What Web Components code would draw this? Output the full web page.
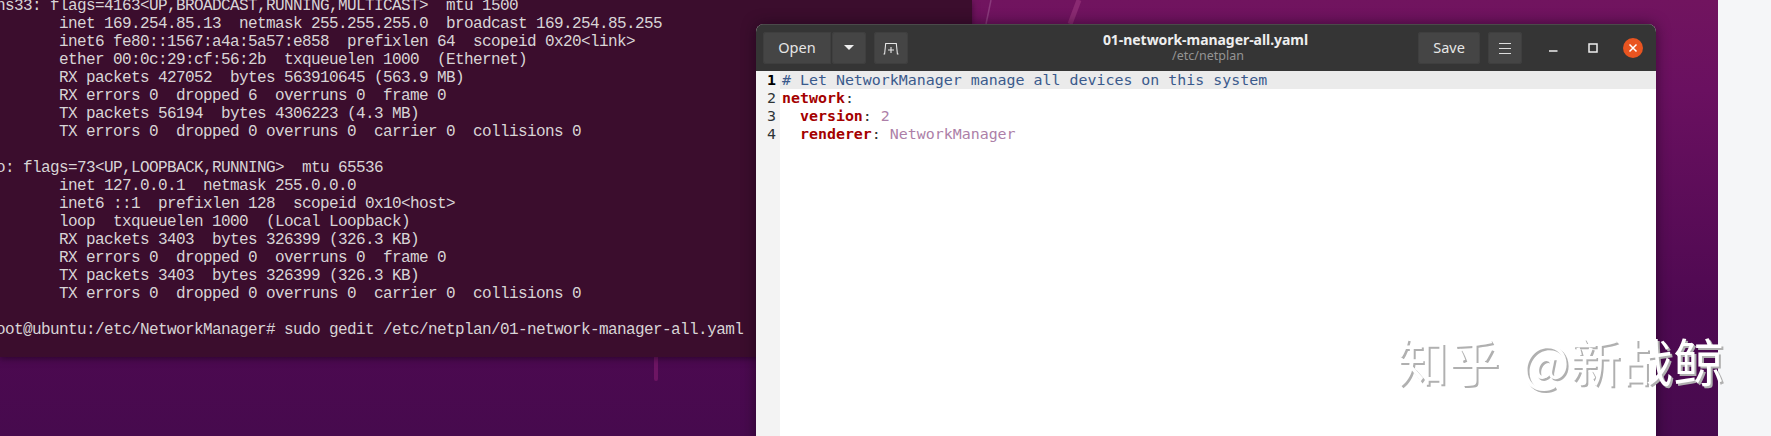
<!doctype html>
<html>
<head>
<meta charset="utf-8">
<style>
html, body { margin: 0; height: 100%; overflow: hidden; }
</style>
</head>
<body>
<shot-page>
  <desk-top>
    <term-window>ens33: flags=4163&lt;UP,BROADCAST,RUNNING,MULTICAST&gt;  mtu 1500
        inet 169.254.85.13  netmask 255.255.255.0  broadcast 169.254.85.255
        inet6 fe80::1567:a4a:5a57:e858  prefixlen 64  scopeid 0x20&lt;link&gt;
        ether 00:0c:29:cf:56:2b  txqueuelen 1000  (Ethernet)
        RX packets 427052  bytes 563910645 (563.9 MB)
        RX errors 0  dropped 6  overruns 0  frame 0
        TX packets 56194  bytes 4306223 (4.3 MB)
        TX errors 0  dropped 0 overruns 0  carrier 0  collisions 0

lo: flags=73&lt;UP,LOOPBACK,RUNNING&gt;  mtu 65536
        inet 127.0.0.1  netmask 255.0.0.0
        inet6 ::1  prefixlen 128  scopeid 0x10&lt;host&gt;
        loop  txqueuelen 1000  (Local Loopback)
        RX packets 3403  bytes 326399 (326.3 KB)
        RX errors 0  dropped 0  overruns 0  frame 0
        TX packets 3403  bytes 326399 (326.3 KB)
        TX errors 0  dropped 0 overruns 0  carrier 0  collisions 0

root@ubuntu:/etc/NetworkManager# sudo gedit /etc/netplan/01-network-manager-all.yaml</term-window>
    <gedit-window></gedit-window>
  </desk-top>
  <water-mark>知乎 @新战鲸</water-mark>
</shot-page>

<script type="module">
const define = (name, html) => {
  customElements.define(name, class extends HTMLElement {
    constructor () {
      super();
      this.attachShadow({ mode: 'open' }).innerHTML = html;
    }
  });
};

define('shot-page', `
<style>
  :host { display: grid; position: relative; grid-template-columns: 1718px 53px; width: 1771px; height: 436px; overflow: hidden; background: #f5f6f8; }
</style>
<slot></slot>`);

define('desk-top', `
<style>
  :host {
    display: block; position: relative; height: 436px; overflow: hidden;
    background: linear-gradient(180deg, #71145f 0, #6a1060 90px, #4e0951 310px, #470a4e 436px);
  }
  svg { position: absolute; left: 0; top: 0; }
</style>
<svg width="1718" height="436" fill="none">
  <path d="M991 0 L986 24" stroke="#8a3a7c" stroke-width="1.5"/>
  <path d="M1079 0 L1070 24" stroke="#8a2a72" stroke-width="5"/>
  <path d="M656 357 V379" stroke="#6d1563" stroke-width="4" stroke-linecap="round"/>
</svg>
<slot></slot>`);

define('term-window', `
<style>
  :host {
    display: block; position: absolute; left: 0; top: 0; width: 972px; height: 357px; overflow: hidden;
    background: #3b0d2d; color: #d8d4d6;
    font: 16px/18px "Liberation Mono", monospace; letter-spacing: -.6px;
    box-shadow: 0 2px 6px rgba(20, 0, 20, .5);
  }
  .text { margin: -3px 0 0 -13px; white-space: pre; }
</style>
<div class="text"><slot></slot></div>`);

define('tool-button', `
<style>
  :host {
    display: flex; align-items: center; justify-content: center; box-sizing: border-box; height: 32px;
    background: #454545; border-radius: 3px; color: #e6e6e6;
    font: 14.5px "Noto Sans", sans-serif;
    box-shadow: inset 0 0 0 1px #3f3f3f;
  }
</style>
<slot></slot>`);

define('code-view', `
<style>
  :host { display: flex; flex: 1; background: #fff; font: 14.93px/18px "DejaVu Sans Mono", monospace; white-space: pre; }
  .gutter { width: 24px; box-sizing: border-box; background: #f3f3f3; text-align: right; padding-right: 4px; color: #2e3436; }
  .gutter b { color: #000; }
  .code { flex: 1; }
  .row { padding-left: 2px; height: 18px; }
  .cur { background: #ebebeb; }
  .cmt { color: #3a5a8c; }
  .key { color: #a40000; font-weight: bold; }
  .val { color: #ad7fa8; }
  .p { color: #2e3436; }
</style>
<div class="gutter"><b>1</b>
2
3
4</div>
<div class="code"><div class="row cur cmt"># Let NetworkManager manage all devices on this system</div><div class="row"><span class="key">network</span><span class="p">:</span></div><div class="row">  <span class="key">version</span><span class="p">:</span> <span class="val">2</span></div><div class="row">  <span class="key">renderer</span><span class="p">:</span> <span class="val">NetworkManager</span></div></div>`);

define('gedit-window', `
<style>
  :host {
    display: flex; flex-direction: column; position: absolute; left: 756px; top: 24px; width: 900px; height: 420px;
    border-radius: 8px 8px 0 0; overflow: hidden; background: #fff;
    box-shadow: 0 0 14px rgba(20, 0, 20, .55);
  }
  header {
    display: grid; grid-template-columns: 1fr auto 1fr; align-items: center; box-sizing: border-box; height: 47px;
    padding: 0 3px 0 7px; background: #353535; box-shadow: inset 0 1px 0 #4a4a4a;
    font-family: "Noto Sans", sans-serif;
  }
  .left, .right { display: flex; align-items: center; }
  .right { justify-content: flex-end; }
  .split { display: flex; gap: 1px; margin-right: 8px; }
  .open { width: 68px; border-radius: 3px 0 0 3px; padding-bottom: 2px; }
  .more { width: 34px; }
  .square { width: 34px; }
  .save { width: 62px; margin-right: 8px; padding-bottom: 2px; }
  .menu { margin-right: 11px; }
  .title { text-align: center; line-height: 16px; }
  .title b { display: block; color: #eee; font-size: 14px; font-weight: 700; letter-spacing: -.05px; margin: 1px 0 0 -5px; }
  .title span { display: block; color: #949494; font-size: 12.5px; }
  .wb { width: 40px; height: 32px; display: flex; align-items: center; justify-content: center; }
  svg { display: block; }
</style>
<header>
  <div class="left">
    <div class="split">
      <tool-button class="open">Open</tool-button>
      <tool-button class="more"><svg width="10" height="5"><path d="M0 0h10L5 5z" fill="#eee"/></svg></tool-button>
    </div>
    <tool-button class="square"><svg width="16" height="16" fill="none" stroke="#e6e6e6" stroke-width="1.100"><path d="M.5 14H1.600L2.700 3.500H13.300L14.400 14H15.500"/><path d="M8 7v6M5 10h6"/></svg></tool-button>
  </div>
  <div class="title"><b>01-network-manager-all.yaml</b><span>/etc/netplan</span></div>
  <div class="right">
    <tool-button class="save">Save</tool-button>
    <tool-button class="square menu"><svg width="12" height="12" stroke="#ddd" stroke-width="1"><path d="M0 1.500h12M0 6.500h12M0 11.500h12"/></svg></tool-button>
    <div class="wb"><svg width="10" height="10" stroke="#eee" stroke-width="1.500"><path d="M1 8h8.500"/></svg></div>
    <div class="wb"><svg width="10" height="10" fill="none" stroke="#eee" stroke-width="1.500"><rect x="1" y="1" width="8" height="8"/></svg></div>
    <div class="wb"><svg width="20" height="20"><circle cx="10" cy="10" r="10" fill="#e95420"/><path d="M6.500 6.500l7 7M13.500 6.500l-7 7" stroke="#fff" stroke-width="1.500"/></svg></div>
  </div>
</header>
<code-view></code-view>`);

define('water-mark', `
<style>
  :host {
    position: absolute; left: 1397px; top: 325px; color: #fff; white-space: nowrap;
    font: 400 51px/70px "Noto Sans CJK SC", sans-serif; letter-spacing: .6px; word-spacing: 9px;
    text-shadow: 2px 2px 0 #b0b0b0;
  }
</style>
<slot></slot>`);
</script>
</body>
</html>
